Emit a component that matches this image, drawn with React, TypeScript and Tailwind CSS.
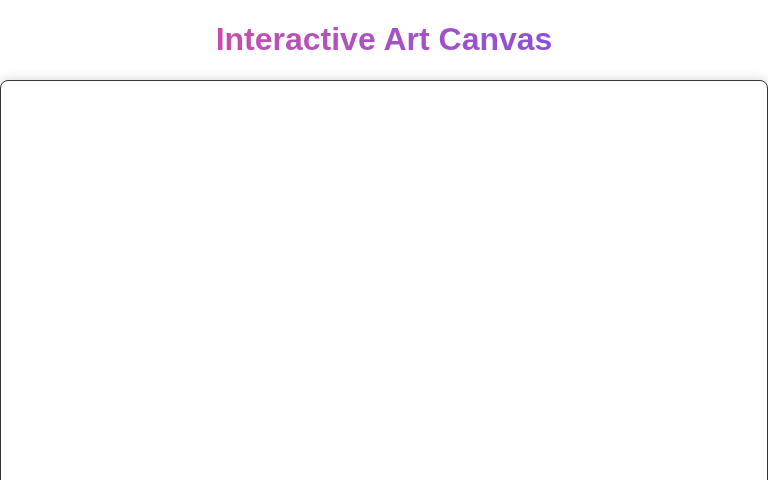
export default function App() {
  return (
    <div className="min-h-screen bg-white font-['Liberation_Sans',Arial,sans-serif]">
      {/* header */}
      <div className="flex justify-center pt-[21px] pb-[22px]">
        <h1 className="inline-block bg-gradient-to-r from-[#c84dab] to-[#8b4fdb] bg-clip-text text-[32px] font-bold leading-[37px] text-transparent">
          Interactive Art Canvas
        </h1>
      </div>

      {/* drawing surface */}
      <div className="h-[600px] w-full rounded-lg border border-[#333] bg-white shadow-[0_0_12px_rgba(0,0,0,0.18)]" />
    </div>
  );
}
